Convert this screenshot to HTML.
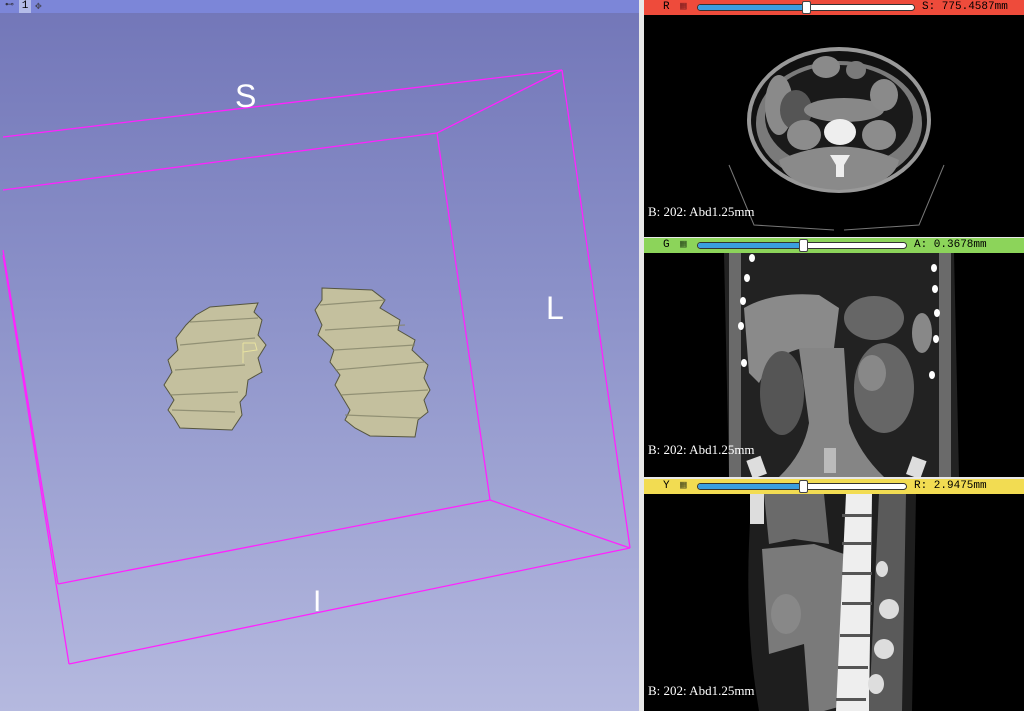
<!DOCTYPE html>
<html><head><meta charset="utf-8"><style>
*{margin:0;padding:0;box-sizing:border-box}
body{width:1024px;height:711px;overflow:hidden;background:#e8e8e8;position:relative;font-family:"Liberation Mono",monospace}
#v3d{position:absolute;left:0;top:0;width:639px;height:711px;background:linear-gradient(#7276b8 0%,#8a90c8 40%,#b5b9df 100%);overflow:hidden}
#bar3d{position:absolute;left:0;top:0;width:639px;height:13px;background:#7c86d8}
.sv{position:absolute;left:644px;width:380px;background:#000;overflow:hidden}
.bar{position:absolute;left:644px;width:380px;height:15px;font-size:11px;line-height:15px;color:#000}
.bar .l{position:absolute;left:19px;top:0}
.bar .tr{position:absolute;left:53px;top:4px;height:7px;border:1px solid #333;border-radius:4px;background:#fff;overflow:hidden}
.bar .fill{height:100%;background:#3a9ee0}
.bar .knob{position:absolute;top:1px;width:9px;height:13px;background:#fff;border:1px solid #444;border-radius:2px}
.bar .v{position:absolute;top:0}
.cap{position:absolute;left:4px;color:#fff;font-family:"Liberation Serif",serif;font-size:13px}
.lbl{position:absolute;color:#fff;font-family:"Liberation Sans",sans-serif;font-size:32px}
</style></head><body>
<div id="v3d">
<svg width="639" height="711" style="position:absolute;left:0;top:0">
<g stroke="#ff22ff" stroke-width="1.3" fill="none">
<line x1="3" y1="137" x2="562" y2="70"/>
<line x1="562" y1="70" x2="630" y2="548"/>
<line x1="630" y1="548" x2="69" y2="664"/>
<line x1="3" y1="255" x2="69" y2="664"/>
<line x1="3" y1="190" x2="437" y2="133"/>
<line x1="437" y1="133" x2="490" y2="500"/>
<line x1="490" y1="500" x2="58" y2="584"/>
<line x1="3" y1="250" x2="58" y2="584"/>
<line x1="437" y1="133" x2="562" y2="70"/>
<line x1="490" y1="500" x2="630" y2="548"/>
</g>
<g fill="#c4c09e" stroke="#55553f" stroke-width="1">
<path d="M210,307 L258,303 L254,312 L262,320 L258,335 L266,345 L258,358 L262,372 L248,380 L246,395 L240,402 L242,415 L232,430 L180,428 L174,418 L168,410 L174,400 L164,385 L172,372 L168,360 L178,350 L176,338 L186,325 L196,315 Z"/>
<path d="M322,288 L372,290 L385,300 L380,308 L400,320 L398,330 L415,340 L412,350 L428,365 L424,378 L430,390 L424,400 L428,412 L418,420 L415,437 L370,436 L355,428 L345,420 L350,410 L335,385 L340,375 L330,362 L334,350 L318,335 L322,325 L315,310 L322,300 Z"/>
</g>
<g stroke="#85856a" stroke-width="1.2" opacity=".8">
<line x1="170" y1="395" x2="238" y2="392"/><line x1="175" y1="370" x2="245" y2="365"/><line x1="180" y1="345" x2="255" y2="338"/><line x1="172" y1="410" x2="235" y2="412"/><line x1="190" y1="322" x2="258" y2="318"/>
<line x1="335" y1="370" x2="425" y2="362"/><line x1="340" y1="395" x2="428" y2="390"/><line x1="325" y1="330" x2="405" y2="325"/><line x1="345" y1="415" x2="420" y2="418"/><line x1="320" y1="305" x2="385" y2="300"/><line x1="335" y1="350" x2="415" y2="345"/>
</g>
<path d="M243,343 L243,363 M243,343 L255,343 L257,350 L243,352" stroke="#e8e2a0" fill="none"/>
</svg>
<div id="bar3d"><span style="position:absolute;left:19px;top:0;width:12px;height:13px;background:#b4bce8;font-size:11px;line-height:13px;text-align:center">1</span><span style="position:absolute;left:5px;top:0;font-size:9px;color:#334">⊷</span><span style="position:absolute;left:35px;top:-1px;font-size:11px;color:#445">✥</span></div>
<div class="lbl" style="left:235px;top:78px">S</div>
<div class="lbl" style="left:546px;top:290px">L</div>
<div class="lbl" style="left:313px;top:585px;font-size:30px">I</div>
</div>

<!-- red -->
<div class="bar" style="top:0;background:#ee4b3b"><span class="l">R</span><span style="position:absolute;left:36px;color:#822">▦</span>
<div class="tr" style="width:218px"><div class="fill" style="width:108px"></div></div><div class="knob" style="left:158px"></div><span class="v" style="left:278px">S: 775.4587mm</span></div>
<div class="sv" style="top:15px;height:222px">
<svg width="380" height="222">
<ellipse cx="195" cy="105" rx="92" ry="73" fill="#999"/>
<ellipse cx="195" cy="105" rx="88" ry="69" fill="#111"/>
<ellipse cx="195" cy="108" rx="83" ry="62" fill="#7a7a7a"/>
<ellipse cx="195" cy="102" rx="74" ry="52" fill="#1a1a1a"/>
<ellipse cx="182" cy="52" rx="14" ry="11" fill="#8a8a8a"/>
<ellipse cx="212" cy="55" rx="10" ry="9" fill="#7a7a7a"/>
<ellipse cx="135" cy="90" rx="14" ry="30" fill="#8a8a8a"/>
<ellipse cx="152" cy="95" rx="16" ry="20" fill="#555"/>
<ellipse cx="200" cy="95" rx="40" ry="12" fill="#888"/>
<ellipse cx="240" cy="80" rx="14" ry="16" fill="#8a8a8a"/>
<ellipse cx="160" cy="120" rx="17" ry="15" fill="#8c8c8c"/>
<ellipse cx="235" cy="120" rx="17" ry="15" fill="#8c8c8c"/>
<path d="M135,145 Q195,118 255,145 Q250,172 195,175 Q140,172 135,145 Z" fill="#8a8a8a"/>
<ellipse cx="196" cy="117" rx="16" ry="13" fill="#eee"/>
<path d="M186,140 L206,140 L200,150 L200,162 L192,162 L192,150 Z" fill="#eee"/>
<path d="M85,150 L110,210 L190,215" stroke="#777" fill="none"/>
<path d="M300,150 L275,210 L200,215" stroke="#777" fill="none"/>
</svg>
<div class="cap" style="top:189px">B: 202: Abd1.25mm</div>
</div>
<!-- green -->
<div class="bar" style="top:238px;background:#8cd45a"><span class="l">G</span><span style="position:absolute;left:36px;color:#352">▦</span>
<div class="tr" style="width:210px"><div class="fill" style="width:104px"></div></div><div class="knob" style="left:155px"></div><span class="v" style="left:270px">A: 0.3678mm</span></div>
<div class="sv" style="top:253px;height:224px">
<svg width="380" height="224">
<path d="M80,0 L310,0 L315,224 L85,224 Z" fill="#222"/>
<rect x="85" y="0" width="12" height="224" fill="#6a6a6a"/>
<rect x="295" y="0" width="12" height="224" fill="#6a6a6a"/>
<path d="M100,55 Q130,38 175,42 L195,55 L190,95 L160,95 Q130,100 115,130 L105,120 Z" fill="#8a8a8a"/>
<ellipse cx="230" cy="65" rx="30" ry="22" fill="#666"/>
<ellipse cx="278" cy="80" rx="10" ry="20" fill="#888"/>
<ellipse cx="138" cy="140" rx="22" ry="42" fill="#555"/>
<ellipse cx="240" cy="135" rx="30" ry="45" fill="#666"/>
<ellipse cx="228" cy="120" rx="14" ry="18" fill="#888"/>
<path d="M155,95 L200,95 L205,170 Q215,200 240,224 L135,224 Q160,200 165,170 Z" fill="#858585"/>
<rect x="180" y="195" width="12" height="25" fill="#bbb"/>
<rect x="105" y="205" width="15" height="19" fill="#ddd" transform="rotate(-20 112 214)"/>
<rect x="265" y="205" width="15" height="19" fill="#ddd" transform="rotate(20 272 214)"/>
<g fill="#fff"><ellipse cx="108" cy="5" rx="3" ry="4"/><ellipse cx="103" cy="25" rx="3" ry="4"/><ellipse cx="99" cy="48" rx="3" ry="4"/><ellipse cx="97" cy="73" rx="3" ry="4"/><ellipse cx="100" cy="110" rx="3" ry="4"/><ellipse cx="290" cy="15" rx="3" ry="4"/><ellipse cx="291" cy="36" rx="3" ry="4"/><ellipse cx="293" cy="60" rx="3" ry="4"/><ellipse cx="292" cy="86" rx="3" ry="4"/><ellipse cx="288" cy="122" rx="3" ry="4"/></g>
</svg>
<div class="cap" style="top:189px">B: 202: Abd1.25mm</div>
</div>
<!-- yellow -->
<div class="bar" style="top:479px;background:#f2dc52"><span class="l">Y</span><span style="position:absolute;left:36px;color:#552">▦</span>
<div class="tr" style="width:210px"><div class="fill" style="width:104px"></div></div><div class="knob" style="left:155px"></div><span class="v" style="left:270px">R: 2.9475mm</span></div>
<div class="sv" style="top:494px;height:217px">
<svg width="380" height="217">
<path d="M108,0 L272,0 L268,217 L115,217 Q98,120 108,0 Z" fill="#1e1e1e"/>
<path d="M235,0 L262,0 L258,217 L225,217 Z" fill="#5a5a5a"/>
<path d="M120,0 L180,0 L185,50 L150,45 L125,50 Z" fill="#6a6a6a"/>
<path d="M118,55 L170,50 L200,60 L205,210 L180,217 L165,217 L160,150 L125,160 Z" fill="#7a7a7a"/>
<ellipse cx="142" cy="120" rx="15" ry="20" fill="#888"/>
<rect x="106" y="0" width="14" height="30" fill="#ddd"/>
<path d="M202,0 L228,0 L225,217 L192,217 Z" fill="#eee"/>
<g fill="#555"><rect x="198" y="20" width="30" height="3"/><rect x="198" y="48" width="30" height="3"/><rect x="198" y="78" width="30" height="3"/><rect x="198" y="108" width="30" height="3"/><rect x="196" y="140" width="30" height="3"/><rect x="194" y="172" width="30" height="3"/><rect x="192" y="204" width="30" height="3"/></g>
<g fill="#ddd"><ellipse cx="238" cy="75" rx="6" ry="8"/><ellipse cx="245" cy="115" rx="10" ry="10"/><ellipse cx="240" cy="155" rx="10" ry="10"/><ellipse cx="232" cy="190" rx="8" ry="10"/></g>
</svg>
<div class="cap" style="top:189px">B: 202: Abd1.25mm</div>
</div>
</body></html>
